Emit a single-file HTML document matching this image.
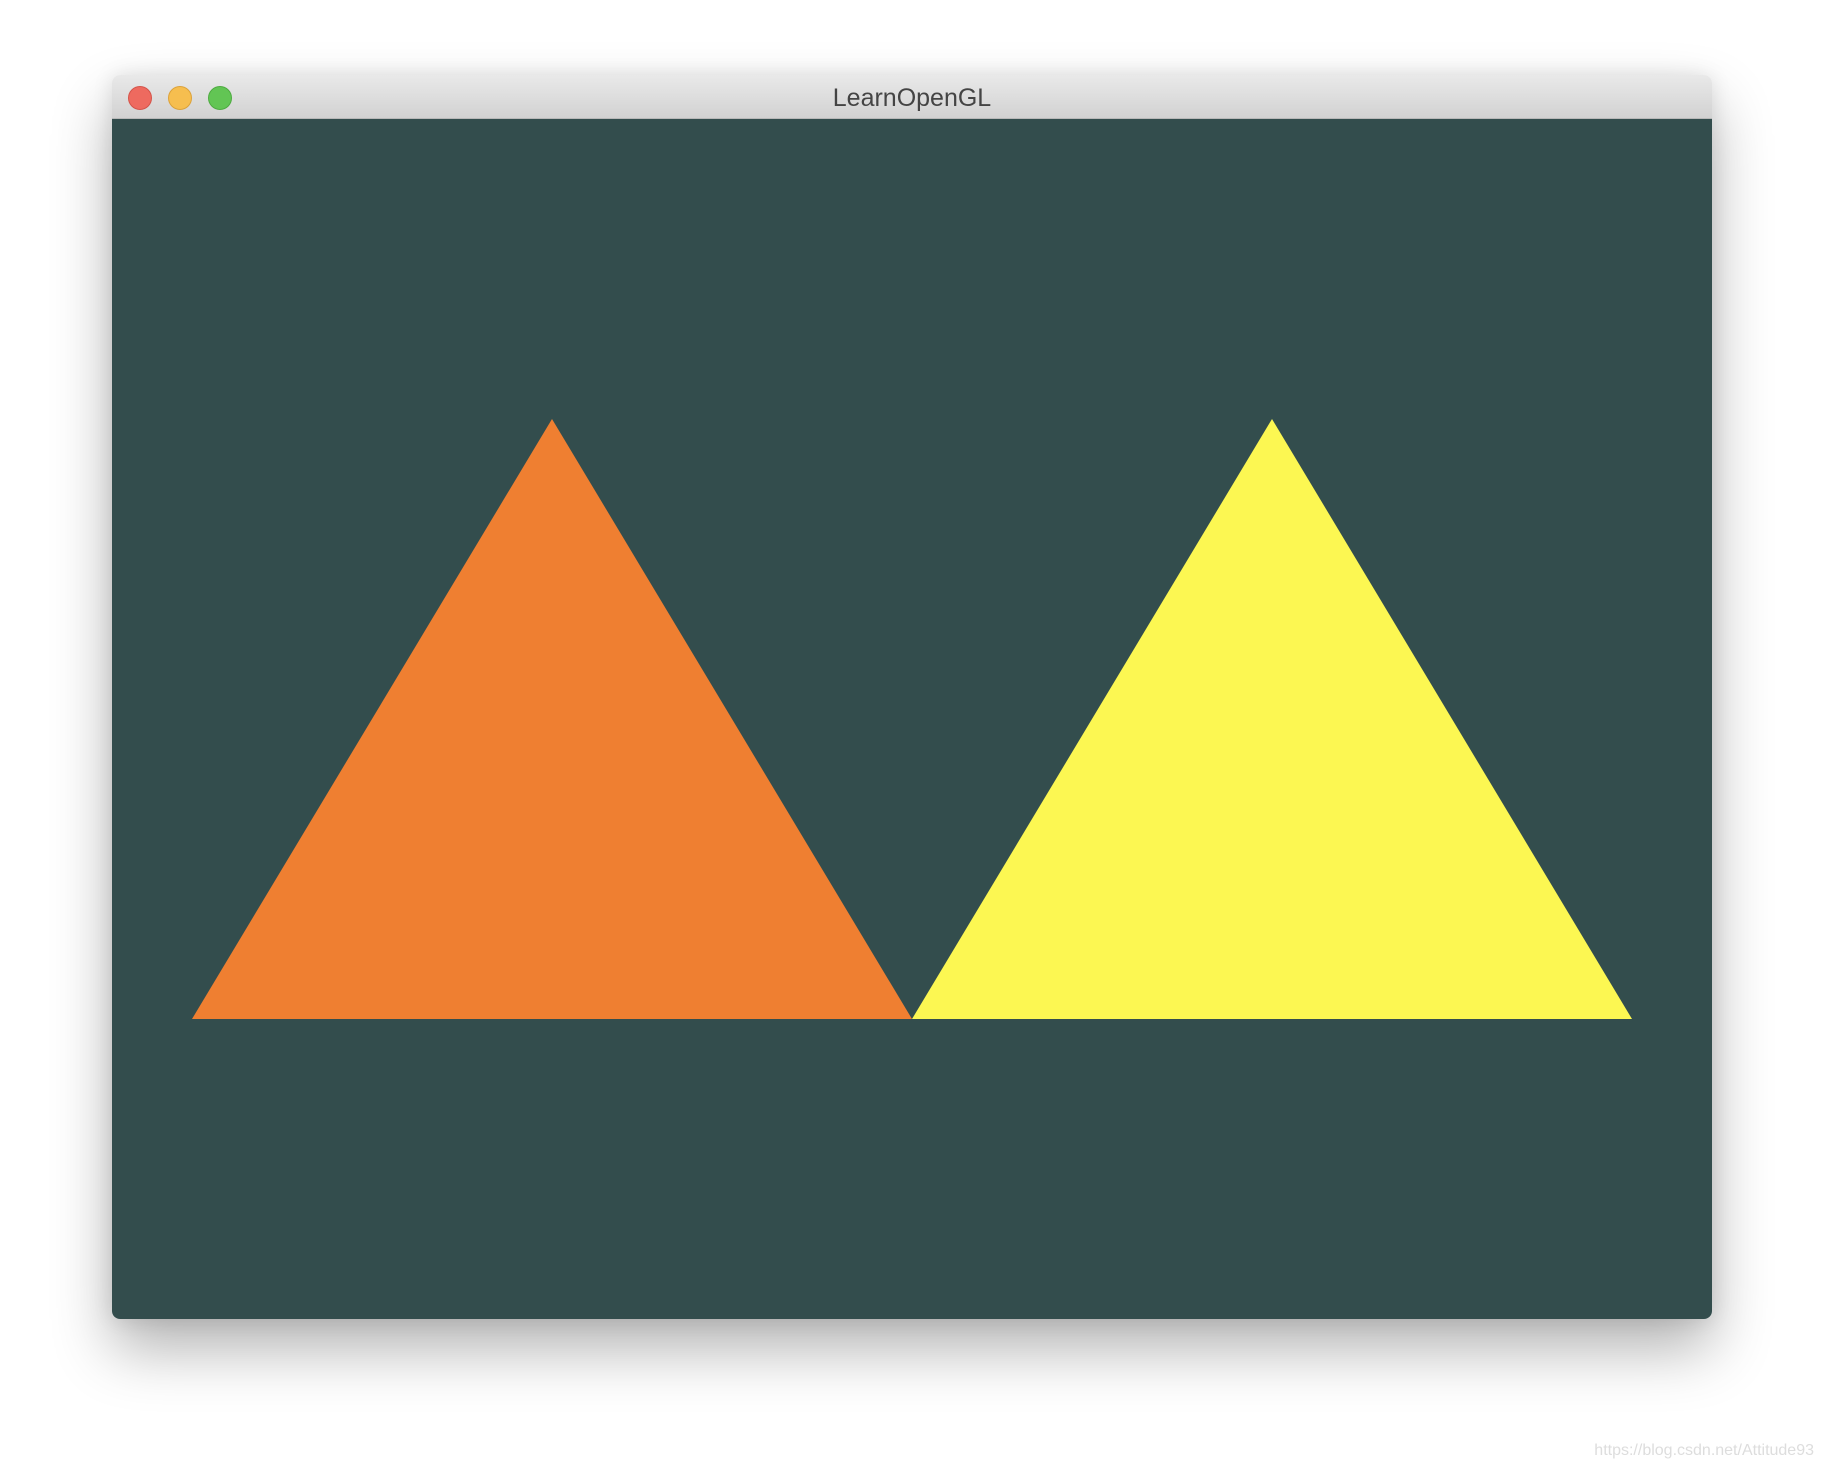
<!DOCTYPE html>
<html><head><style>
html,body{margin:0;padding:0;width:1824px;height:1468px;background:#fff;overflow:hidden;font-family:"Liberation Sans",sans-serif}
.win{position:absolute;left:112px;top:75px;width:1600px;height:1244px;border-radius:8px;overflow:hidden;box-shadow:0 30px 60px rgba(0,0,0,0.3),0 0 20px rgba(0,0,0,0.1)}
.tb{position:absolute;left:0;top:0;width:1600px;height:44px;background:linear-gradient(#e9e9e9,#d2d2d2);border-bottom:1px solid #b8b8b8;box-sizing:border-box}
.dot{position:absolute;top:11px;width:24px;height:24px;border-radius:50%;box-sizing:border-box}
.t{position:absolute;left:0;right:0;top:9px;text-align:center;font-size:25px;color:#444}
.c{position:absolute;left:0;top:44px;width:1600px;height:1200px;background:#334d4d}
.wm{position:absolute;right:10px;top:1442px;font-size:16px;color:#ddd}
</style></head><body>
<div class="win">
<div class="tb">
<div class="dot" style="left:16px;background:#ee6a5f;border:1px solid #d4544a"></div>
<div class="dot" style="left:56px;background:#f6be4f;border:1px solid #dca23a"></div>
<div class="dot" style="left:96px;background:#62c554;border:1px solid #4eab41"></div>
<div class="t">LearnOpenGL</div>
</div>
<div class="c">
<svg width="1600" height="1200" viewBox="0 0 1600 1200">
<polygon points="80,900 800,900 440,300" fill="#ef7f31"/>
<polygon points="800,900 1520,900 1160,300" fill="#fcf752"/>
</svg>
</div>
</div>
<div class="wm">https://blog.csdn.net/Attitude93</div>
</body></html>
